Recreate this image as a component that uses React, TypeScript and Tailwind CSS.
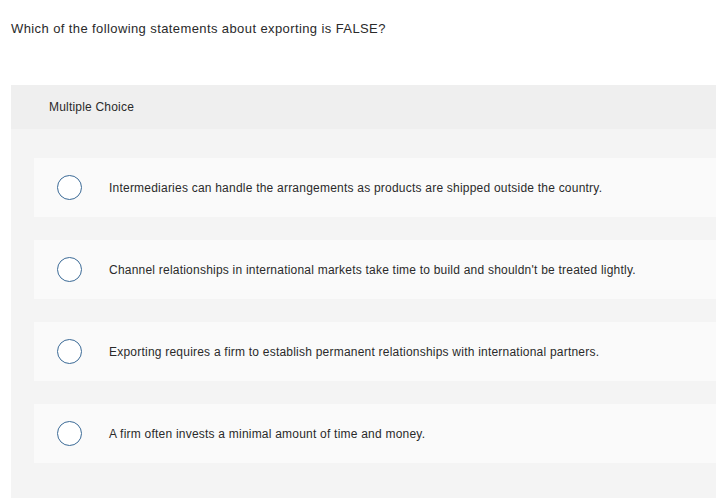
const options = [
  'Intermediaries can handle the arrangements as products are shipped outside the country.',
  "Channel relationships in international markets take time to build and shouldn't be treated lightly.",
  'Exporting requires a firm to establish permanent relationships with international partners.',
  'A firm often invests a minimal amount of time and money.',
];

export default function App() {
  return (
    <div className="min-h-[498px] bg-white font-['Liberation_Sans',Arial,sans-serif] text-[#2a2a2a]">
      <div className="px-[11px] pt-[21px] pb-[48px] text-[13px] leading-[16px] tracking-[0.4px]">
        Which of the following statements about exporting is FALSE?
      </div>

      <div className="ml-[11px] mr-px bg-[#f4f4f4] pb-[40px]">
        <div className="h-[44px] bg-[#efefef] pl-[38px] flex items-center text-[12px] tracking-[0.2px]">
          Multiple Choice
        </div>

        <div className="pl-[23px] pt-[29px] flex flex-col gap-[23px]">
          {options.map((text) => (
            <div
              key={text}
              className="h-[59px] bg-[#fafafa] flex items-center pl-[23px]"
            >
              <span className="w-[25px] h-[25px] rounded-full border-[1.5px] border-[#3b6a96] bg-white shrink-0" />
              <span className="ml-[27px] text-[12px] tracking-[0.22px] whitespace-nowrap">{text}</span>
            </div>
          ))}
        </div>
      </div>
    </div>
  );
}
